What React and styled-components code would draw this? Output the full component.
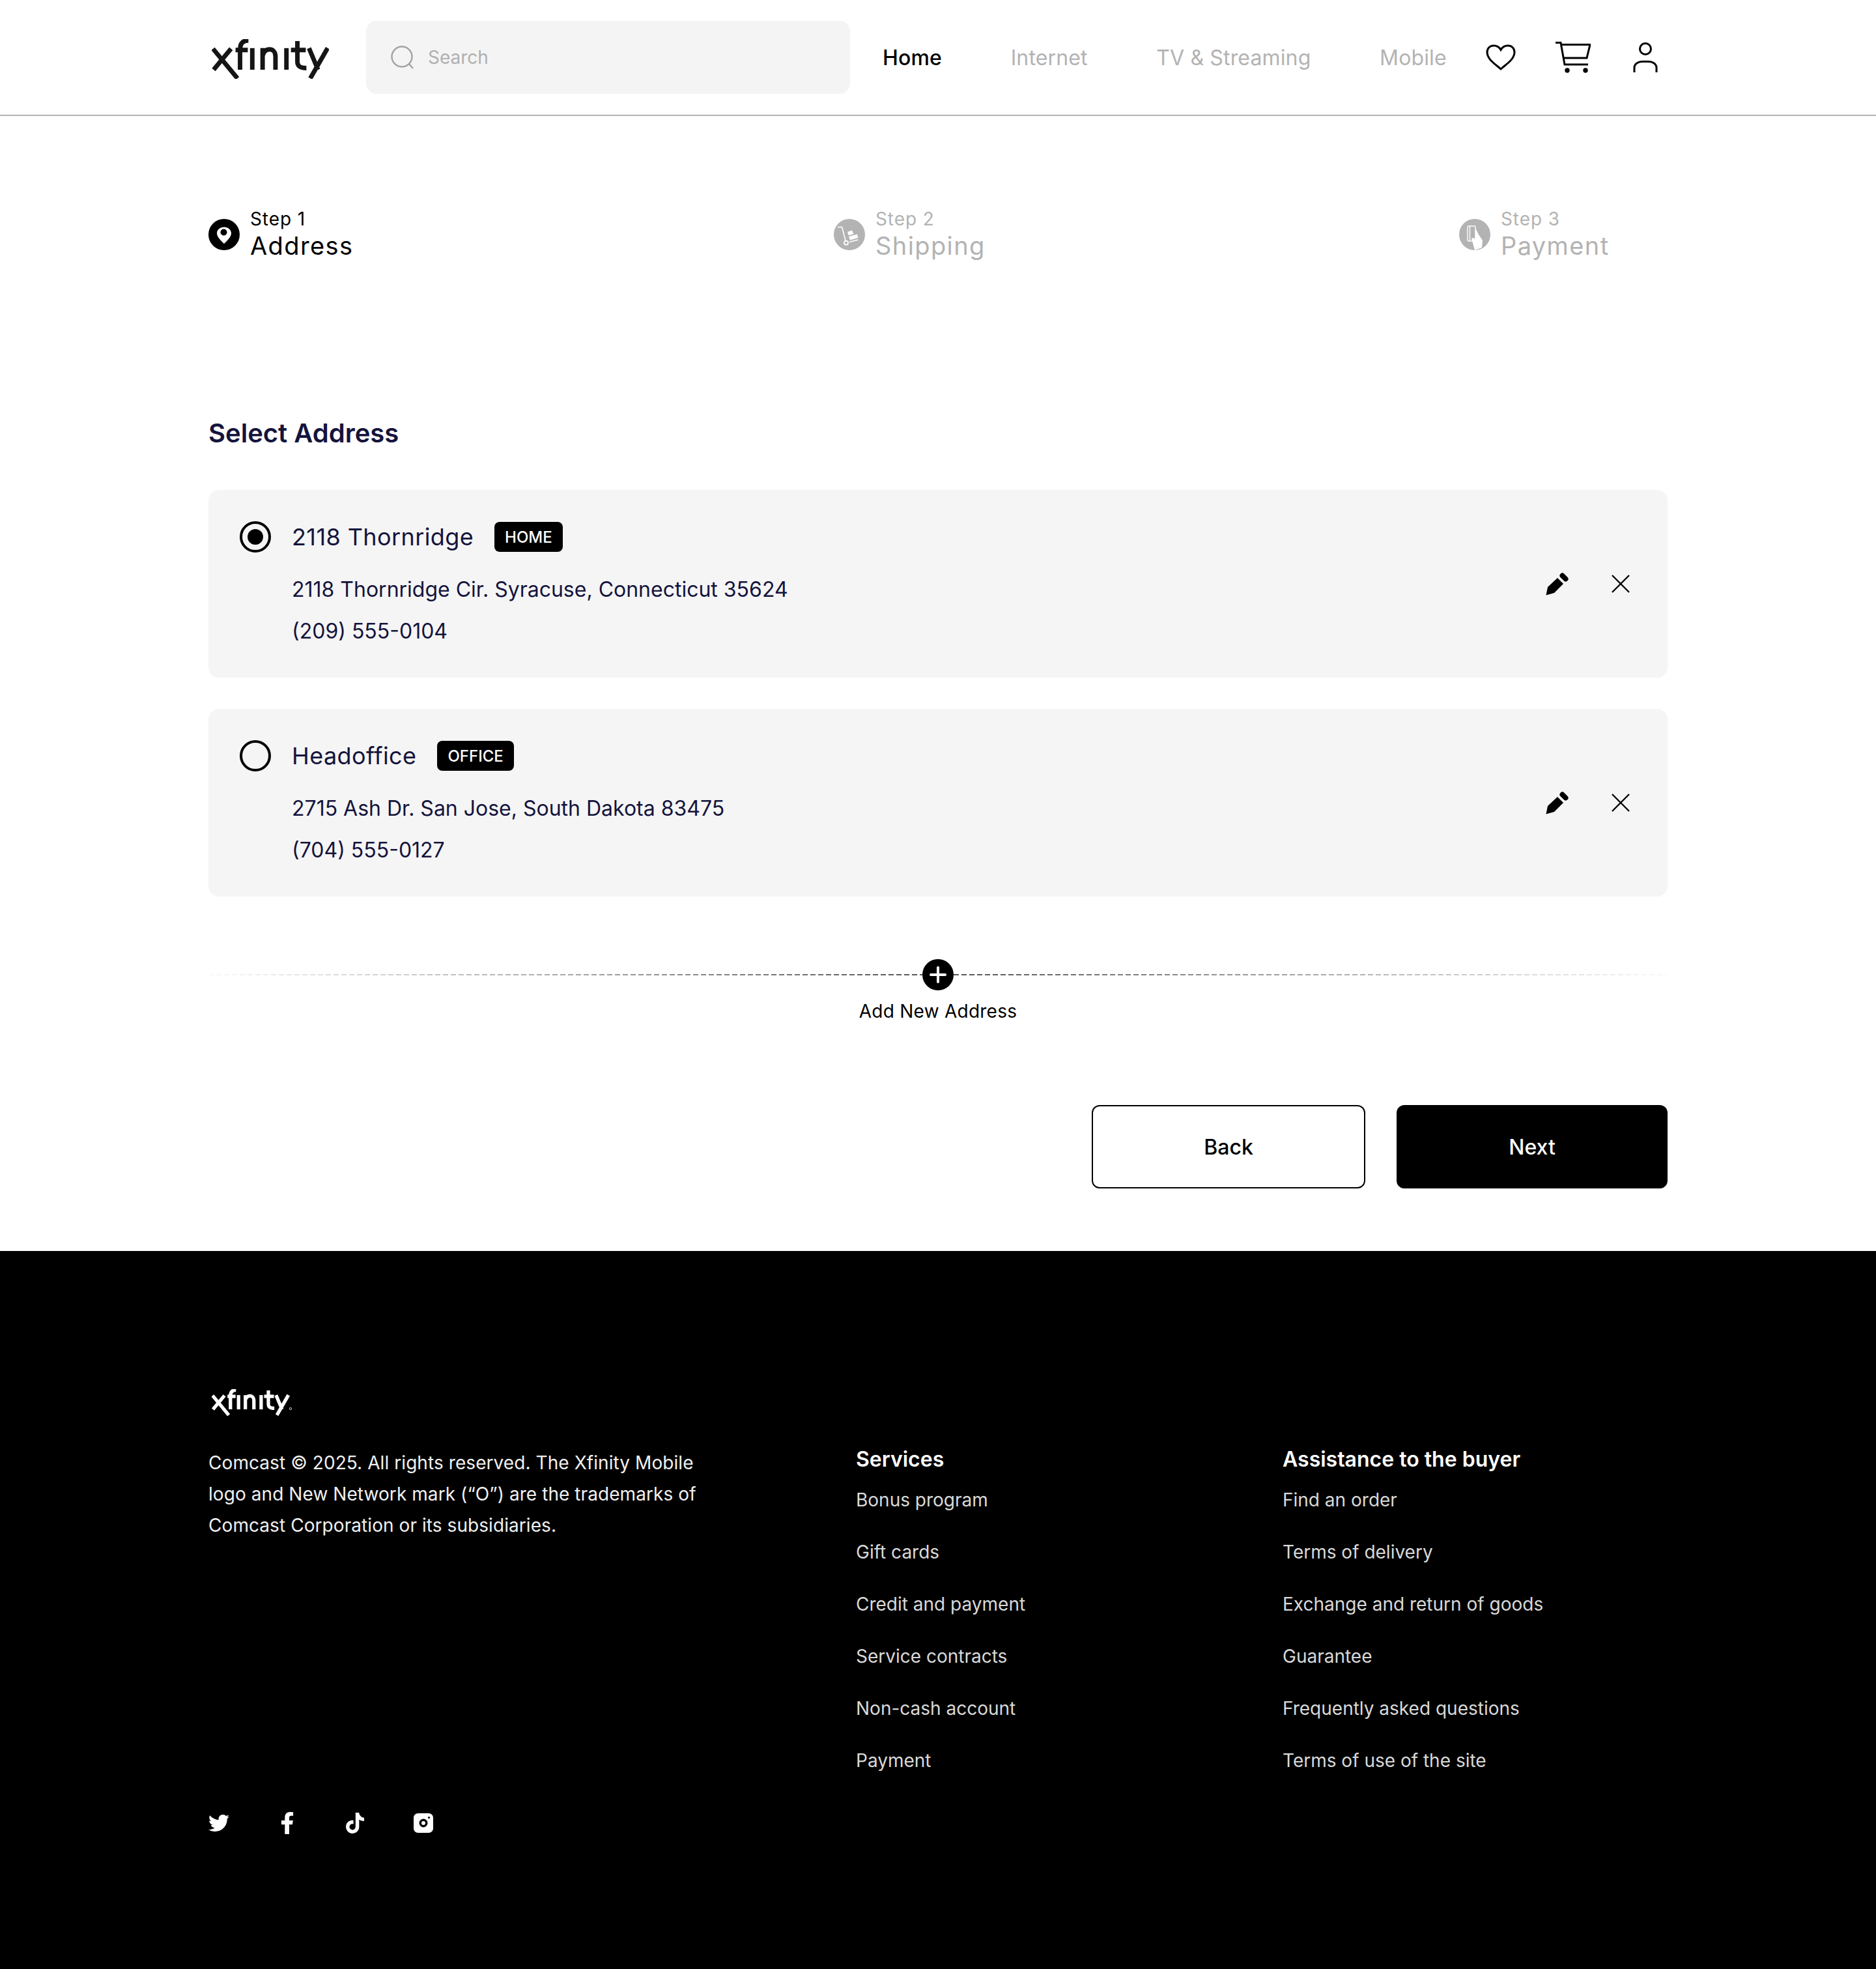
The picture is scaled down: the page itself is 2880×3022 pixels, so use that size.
import React from "react";
import styled, { createGlobalStyle } from "styled-components";
import { FaTwitter, FaFacebookF, FaTiktok } from "react-icons/fa";

const GlobalStyle = createGlobalStyle`
  html, body {
    margin: 0;
    padding: 0;
    background: #fff;
    font-family: Inter, "Liberation Sans", sans-serif;
  }
  * {
    box-sizing: border-box;
  }
`;

const Logo = ({ width, color, mark }) => (
  <LogoSvg $width={width} viewBox={mark ? "0 0 188 62" : "0 0 182 62"} fill="none" stroke={color} strokeWidth={mark ? 8 : 7}>
    <path d="M2 15 L40 61 M30 15 L3 47.5" />
    <path d="M44 47.5 V16 C44 6 49 2 57 2 M37 17 H56" />
    <path d="M63 14 V47.5" />
    <path d="M79 47.5 V14 M79 26 C81 18 86 16 90 16 C95 16 99 20 99 27 V47.5" />
    <path d="M116 14 V47.5" />
    <path d="M133 3 V35 C133 42 137 45 147 45 M123 17 H146" />
    <path d="M151 14 L165 47.5 M180 14 L153 61" />
    {mark && <circle cx="185" cy="46" r="2.5" strokeWidth="1.2" />}
  </LogoSvg>
);

const steps = [
  { small: "Step 1", big: "Address", kind: "pin", active: true },
  { small: "Step 2", big: "Shipping", kind: "cart" },
  { small: "Step 3", big: "Payment", kind: "card" },
];

const addresses = [
  { name: "2118 Thornridge", tag: "HOME", line: "2118 Thornridge Cir. Syracuse, Connecticut 35624", phone: "(209) 555-0104", selected: true },
  { name: "Headoffice", tag: "OFFICE", line: "2715 Ash Dr. San Jose, South Dakota 83475", phone: "(704) 555-0127" },
];

const services = ["Bonus program", "Gift cards", "Credit and payment", "Service contracts", "Non-cash account", "Payment"];
const assistance = ["Find an order", "Terms of delivery", "Exchange and return of goods", "Guarantee", "Frequently asked questions", "Terms of use of the site"];

const StepIcon = ({ kind, active }) => (
  <StepSvg viewBox="0 0 48 48">
    <circle cx="24" cy="24" r="24" fill={active ? "#000" : "#b3b3b3"} />
    {kind === "pin" && (
      <>
        <path d="M24 12.5 C18 12.5 13 16.5 13 22 C13 28 20 34 24 38 C28 34 35 28 35 22 C35 16.5 30 12.5 24 12.5 Z" fill="#fff" />
        <circle cx="23.5" cy="20.5" r="5" fill="#000" />
      </>
    )}
    {kind === "cart" && (
      <g>
        <path d="M6 12.5 H12.5 L18 33 M24 35.5 L37.5 32" fill="none" stroke="#fff" strokeWidth="1.6" />
        <path d="M21 20 L28 17.5 L30.5 23 L23 25.5 Z M23 27 L36 23.5 L37.5 29 L25 32.5 Z" fill="#fff" />
        <circle cx="19" cy="36.7" r="3" fill="none" stroke="#fff" strokeWidth="1.8" />
      </g>
    )}
    {kind === "card" && (
      <g>
        <rect x="13" y="11" width="12" height="23" rx="1.5" fill="none" stroke="#fff" strokeWidth="1.4" />
        <path d="M16.5 11 V34" stroke="#fff" strokeWidth="1.4" />
        <path d="M25 14 L30 24 L36 33 L35 44 L24 48 L21 37 L19 30 L22 29 L25 31 Z" fill="#fff" />
      </g>
    )}
  </StepSvg>
);

const App = () => {
  return (
    <>
      <GlobalStyle />
      <Header>
        <LogoSlot>
          <Logo width={180} color="#151515" />
        </LogoSlot>
        <SearchBox>
          <svg width="38" height="38" viewBox="0 0 38 38" fill="none" stroke="#a3a3a3" strokeWidth="2.4">
            <circle cx="18" cy="18" r="15.5" />
            <path d="M29 29 L35 36" />
          </svg>
          <SearchText>Search</SearchText>
        </SearchBox>
        <Nav>
          <NavLink $active>Home</NavLink>
          <NavLink>Internet</NavLink>
          <NavLink>TV &amp; Streaming</NavLink>
          <NavLink>Mobile</NavLink>
        </Nav>
        <HeaderIcons>
          <svg width="46" height="40" viewBox="0 0 46 40" fill="none" stroke="#000" strokeWidth="3">
            <path d="M23 38 C14 30 2 23 2 12 C2 6 6.5 2 12 2 C16.5 2 20.5 4 23 8.5 C25.5 4 29.5 2 34 2 C39.5 2 44 6 44 12 C44 23 32 30 23 38 Z" />
          </svg>
          <svg width="54" height="48" viewBox="0 0 54 48" fill="none" stroke="#000" strokeWidth="3">
            <path d="M0 1.5 H8 L14 35 H50" />
            <path d="M9 4.5 H53 L48 25 H12" />
            <circle cx="18" cy="44" r="2.2" fill="#000" />
            <circle cx="46" cy="44" r="2.2" fill="#000" />
          </svg>
          <UserIcon width="38" height="48" viewBox="0 0 38 48" fill="none" stroke="#000" strokeWidth="3">
            <circle cx="19" cy="11" r="8.5" />
            <path d="M2 47 V40 C2 34 8 30.5 14 30.5 H24 C30 30.5 36 34 36 40 V47" />
          </UserIcon>
        </HeaderIcons>
      </Header>

      <Main>
        <Steps>
          {steps.map((s) => (
            <Step key={s.small}>
              <StepIcon kind={s.kind} active={s.active} />
              <StepLabel $active={s.active}>
                <StepSmall>{s.small}</StepSmall>
                <StepBig>{s.big}</StepBig>
              </StepLabel>
            </Step>
          ))}
        </Steps>

        <Title>Select Address</Title>

        <CardList>
          {addresses.map((a) => (
            <Card key={a.name}>
              <Radio>{a.selected && <RadioDot />}</Radio>
              <CardBody>
                <NameRow>
                  <Name>{a.name}</Name>
                  <Tag>{a.tag}</Tag>
                </NameRow>
                <AddressLine>{a.line}</AddressLine>
                <PhoneLine>{a.phone}</PhoneLine>
              </CardBody>
              <Actions>
                <svg width="35" height="35" viewBox="0 0 35 35" fill="#000">
                  <path d="M0.5 34.5 L3 22 L18 8 L27 17 L13 31 Z" />
                  <path d="M25.5 4.5 L30.5 9.5" stroke="#000" strokeWidth="8" strokeLinecap="round" />
                </svg>
                <svg width="28" height="28" viewBox="0 0 28 28" fill="none" stroke="#000" strokeWidth="2.4">
                  <path d="M1 1 L27 27 M27 1 L1 27" />
                </svg>
              </Actions>
            </Card>
          ))}
        </CardList>

        <AddRow>
          <DashLine $side="left" />
          <PlusCircle>
            <svg width="26" height="26" viewBox="0 0 26 26" fill="none" stroke="#fff" strokeWidth="4" strokeLinecap="round">
              <path d="M13 2 V24 M2 13 H24" />
            </svg>
          </PlusCircle>
          <DashLine $side="right" />
        </AddRow>
        <AddLabel>Add New Address</AddLabel>

        <Buttons>
          <BackButton>Back</BackButton>
          <NextButton>Next</NextButton>
        </Buttons>
      </Main>

      <Footer>
        <FooterLeft>
          <Logo width={123} color="#fff" mark />
          <Copy>
            Comcast © 2025. All rights reserved. The Xfinity Mobile
            <br />
            logo and New Network mark (“O”) are the trademarks of
            <br />
            Comcast Corporation or its subsidiaries.
          </Copy>
          <Socials>
            <SocialSlot><FaTwitter size={32} /></SocialSlot>
            <SocialSlot><FaFacebookF size={34} /></SocialSlot>
            <SocialSlot><FaTiktok size={32} /></SocialSlot>
            <SocialSlot>
              <svg width="32" height="32" viewBox="0 0 32 32">
                <path
                  fillRule="evenodd"
                  fill="#fff"
                  d="M8 1 H24 C28 1 31 4 31 8 V24 C31 28 28 31 24 31 H8 C4 31 1 28 1 24 V8 C1 4 4 1 8 1 Z M16 9.5 A6.5 6.5 0 1 0 16 22.5 A6.5 6.5 0 1 0 16 9.5 Z M16 13 A3 3 0 1 1 16 19 A3 3 0 1 1 16 13 Z M24.5 6 A1.6 1.6 0 1 0 24.5 9.2 A1.6 1.6 0 1 0 24.5 6 Z"
                />
              </svg>
            </SocialSlot>
          </Socials>
        </FooterLeft>
        <LinkColumn>
          <LinkHead>Services</LinkHead>
          {services.map((l) => (
            <FooterLink key={l}>{l}</FooterLink>
          ))}
        </LinkColumn>
        <LinkColumn>
          <LinkHead>Assistance to the buyer</LinkHead>
          {assistance.map((l) => (
            <FooterLink key={l}>{l}</FooterLink>
          ))}
        </LinkColumn>
      </Footer>
    </>
  );
};

export default App;

const LogoSvg = styled.svg.attrs((p) => ({ width: p.$width }))`
  display: block;
  flex: none;
`;

const Header = styled.header`
  display: flex;
  align-items: center;
  height: 178px;
  padding-left: 325px;
  border-bottom: 2px solid #b3b3b3;
`;

const LogoSlot = styled.div`
  width: 237px;
  flex: none;
  padding-top: 5px;
`;

const SearchBox = styled.div`
  display: flex;
  align-items: center;
  gap: 20px;
  width: 743px;
  height: 112px;
  padding-left: 37px;
  border-radius: 16px;
  background: #f4f4f4;
`;

const SearchText = styled.span`
  font-size: 28px;
  color: #b0b0b0;
`;

const Nav = styled.nav`
  display: flex;
  gap: 105.7px;
  margin-left: 50px;
`;

const NavLink = styled.a`
  font-size: 32px;
  letter-spacing: 0.14px;
  font-weight: ${(p) => (p.$active ? 500 : 400)};
  color: ${(p) => (p.$active ? "#000" : "#b3b3b3")};
`;

const HeaderIcons = styled.div`
  display: flex;
  align-items: center;
  gap: 61px;
  margin-left: 60px;
`;

const UserIcon = styled.svg`
  margin-left: 4px;
`;

const Main = styled.main`
  padding: 0 320px 96px;
`;

const Steps = styled.div`
  display: grid;
  grid-template-columns: repeat(3, 320px);
  justify-content: space-between;
  padding-top: 140px;
`;

const Step = styled.div`
  display: flex;
  align-items: center;
  gap: 16px;
`;

const StepSvg = styled.svg`
  width: 48px;
  height: 48px;
  flex: none;
`;

const StepLabel = styled.div`
  display: flex;
  flex-direction: column;
  color: ${(p) => (p.$active ? "#000" : "#b3b3b3")};
`;

const StepSmall = styled.span`
  font-size: 28px;
  line-height: 36px;
  letter-spacing: 0.9px;
`;

const StepBig = styled.span`
  font-size: 38px;
  line-height: 47px;
  letter-spacing: 1.4px;
`;

const Title = styled.h2`
  margin: 236px 0 0;
  font-size: 40px;
  line-height: 56px;
  font-weight: 600;
  color: #14143c;
`;

const CardList = styled.div`
  display: flex;
  flex-direction: column;
  gap: 48px;
  margin-top: 59px;
`;

const Card = styled.div`
  display: flex;
  align-items: flex-start;
  height: 288px;
  padding: 48px 58px 0 48px;
  border-radius: 16px;
  background: #f5f5f5;
`;

const Radio = styled.div`
  display: flex;
  align-items: center;
  justify-content: center;
  width: 48px;
  height: 48px;
  flex: none;
  border: 4px solid #000;
  border-radius: 50%;
`;

const RadioDot = styled.div`
  width: 24px;
  height: 24px;
  border-radius: 50%;
  background: #000;
`;

const CardBody = styled.div`
  flex: 1;
  margin-left: 32px;
  color: #14143c;
`;

const NameRow = styled.div`
  display: flex;
  align-items: center;
  gap: 32px;
  height: 48px;
`;

const Name = styled.span`
  font-size: 36px;
  letter-spacing: 0.4px;
`;

const Tag = styled.span`
  display: flex;
  align-items: center;
  height: 46px;
  padding: 0 16px;
  border-radius: 8px;
  background: #000;
  color: #fff;
  font-size: 24px;
  font-weight: 500;
`;

const AddressLine = styled.div`
  margin-top: 33px;
  font-size: 32px;
  line-height: 48px;
`;

const PhoneLine = styled(AddressLine)`
  margin-top: 16px;
`;

const Actions = styled.div`
  display: flex;
  align-items: center;
  gap: 66px;
  height: 192px;
`;

const AddRow = styled.div`
  display: flex;
  align-items: center;
  margin-top: 96px;
`;

const DashLine = styled.div`
  flex: 1;
  height: 2px;
  background: repeating-linear-gradient(90deg, #555 0 8px, transparent 8px 12px);
  mask-image: linear-gradient(
    ${(p) => (p.$side === "left" ? "90deg" : "270deg")},
    rgba(0, 0, 0, 0.03),
    #000
  );
`;

const PlusCircle = styled.div`
  display: flex;
  align-items: center;
  justify-content: center;
  width: 48px;
  height: 48px;
  border-radius: 50%;
  background: #000;
`;

const AddLabel = styled.div`
  margin-top: 14px;
  text-align: center;
  font-size: 28px;
  line-height: 36px;
  letter-spacing: 0.25px;
  color: #000;
`;

const Buttons = styled.div`
  display: flex;
  justify-content: flex-end;
  gap: 48px;
  margin-top: 126px;
`;

const BackButton = styled.button`
  width: 420px;
  height: 128px;
  border: 2px solid #000;
  border-radius: 12px;
  background: #fff;
  color: #000;
  font-family: inherit;
  font-size: 32px;
  font-weight: 500;
`;

const NextButton = styled(BackButton)`
  width: 416px;
  background: #000;
  color: #fff;
`;

const Footer = styled.footer`
  display: grid;
  grid-template-columns: 994px 655px 1fr;
  height: 1102px;
  padding: 212px 320px 0;
  background: #000;
  color: #fff;
`;

const FooterLeft = styled.div`
  padding-left: 5px;
`;

const Copy = styled.p`
  margin: 48px 0 0 -5px;
  font-size: 28px;
  line-height: 48px;
  letter-spacing: 0.07px;
  color: #f0f0f0;
`;

const Socials = styled.div`
  display: flex;
  align-items: center;
  gap: 72.5px;
  margin: 417px 0 0 -5px;
`;

const SocialSlot = styled.div`
  display: flex;
  align-items: center;
  justify-content: center;
  width: 32px;
  height: 32px;
`;

const LinkColumn = styled.div`
  display: flex;
  flex-direction: column;
  padding-top: 88px;
`;

const LinkHead = styled.h3`
  margin: 0 0 18px;
  font-size: 32px;
  line-height: 40px;
  font-weight: 600;
`;

const FooterLink = styled.a`
  height: 80px;
  font-size: 28px;
  line-height: 48px;
  color: #d9d9d9;
`;
